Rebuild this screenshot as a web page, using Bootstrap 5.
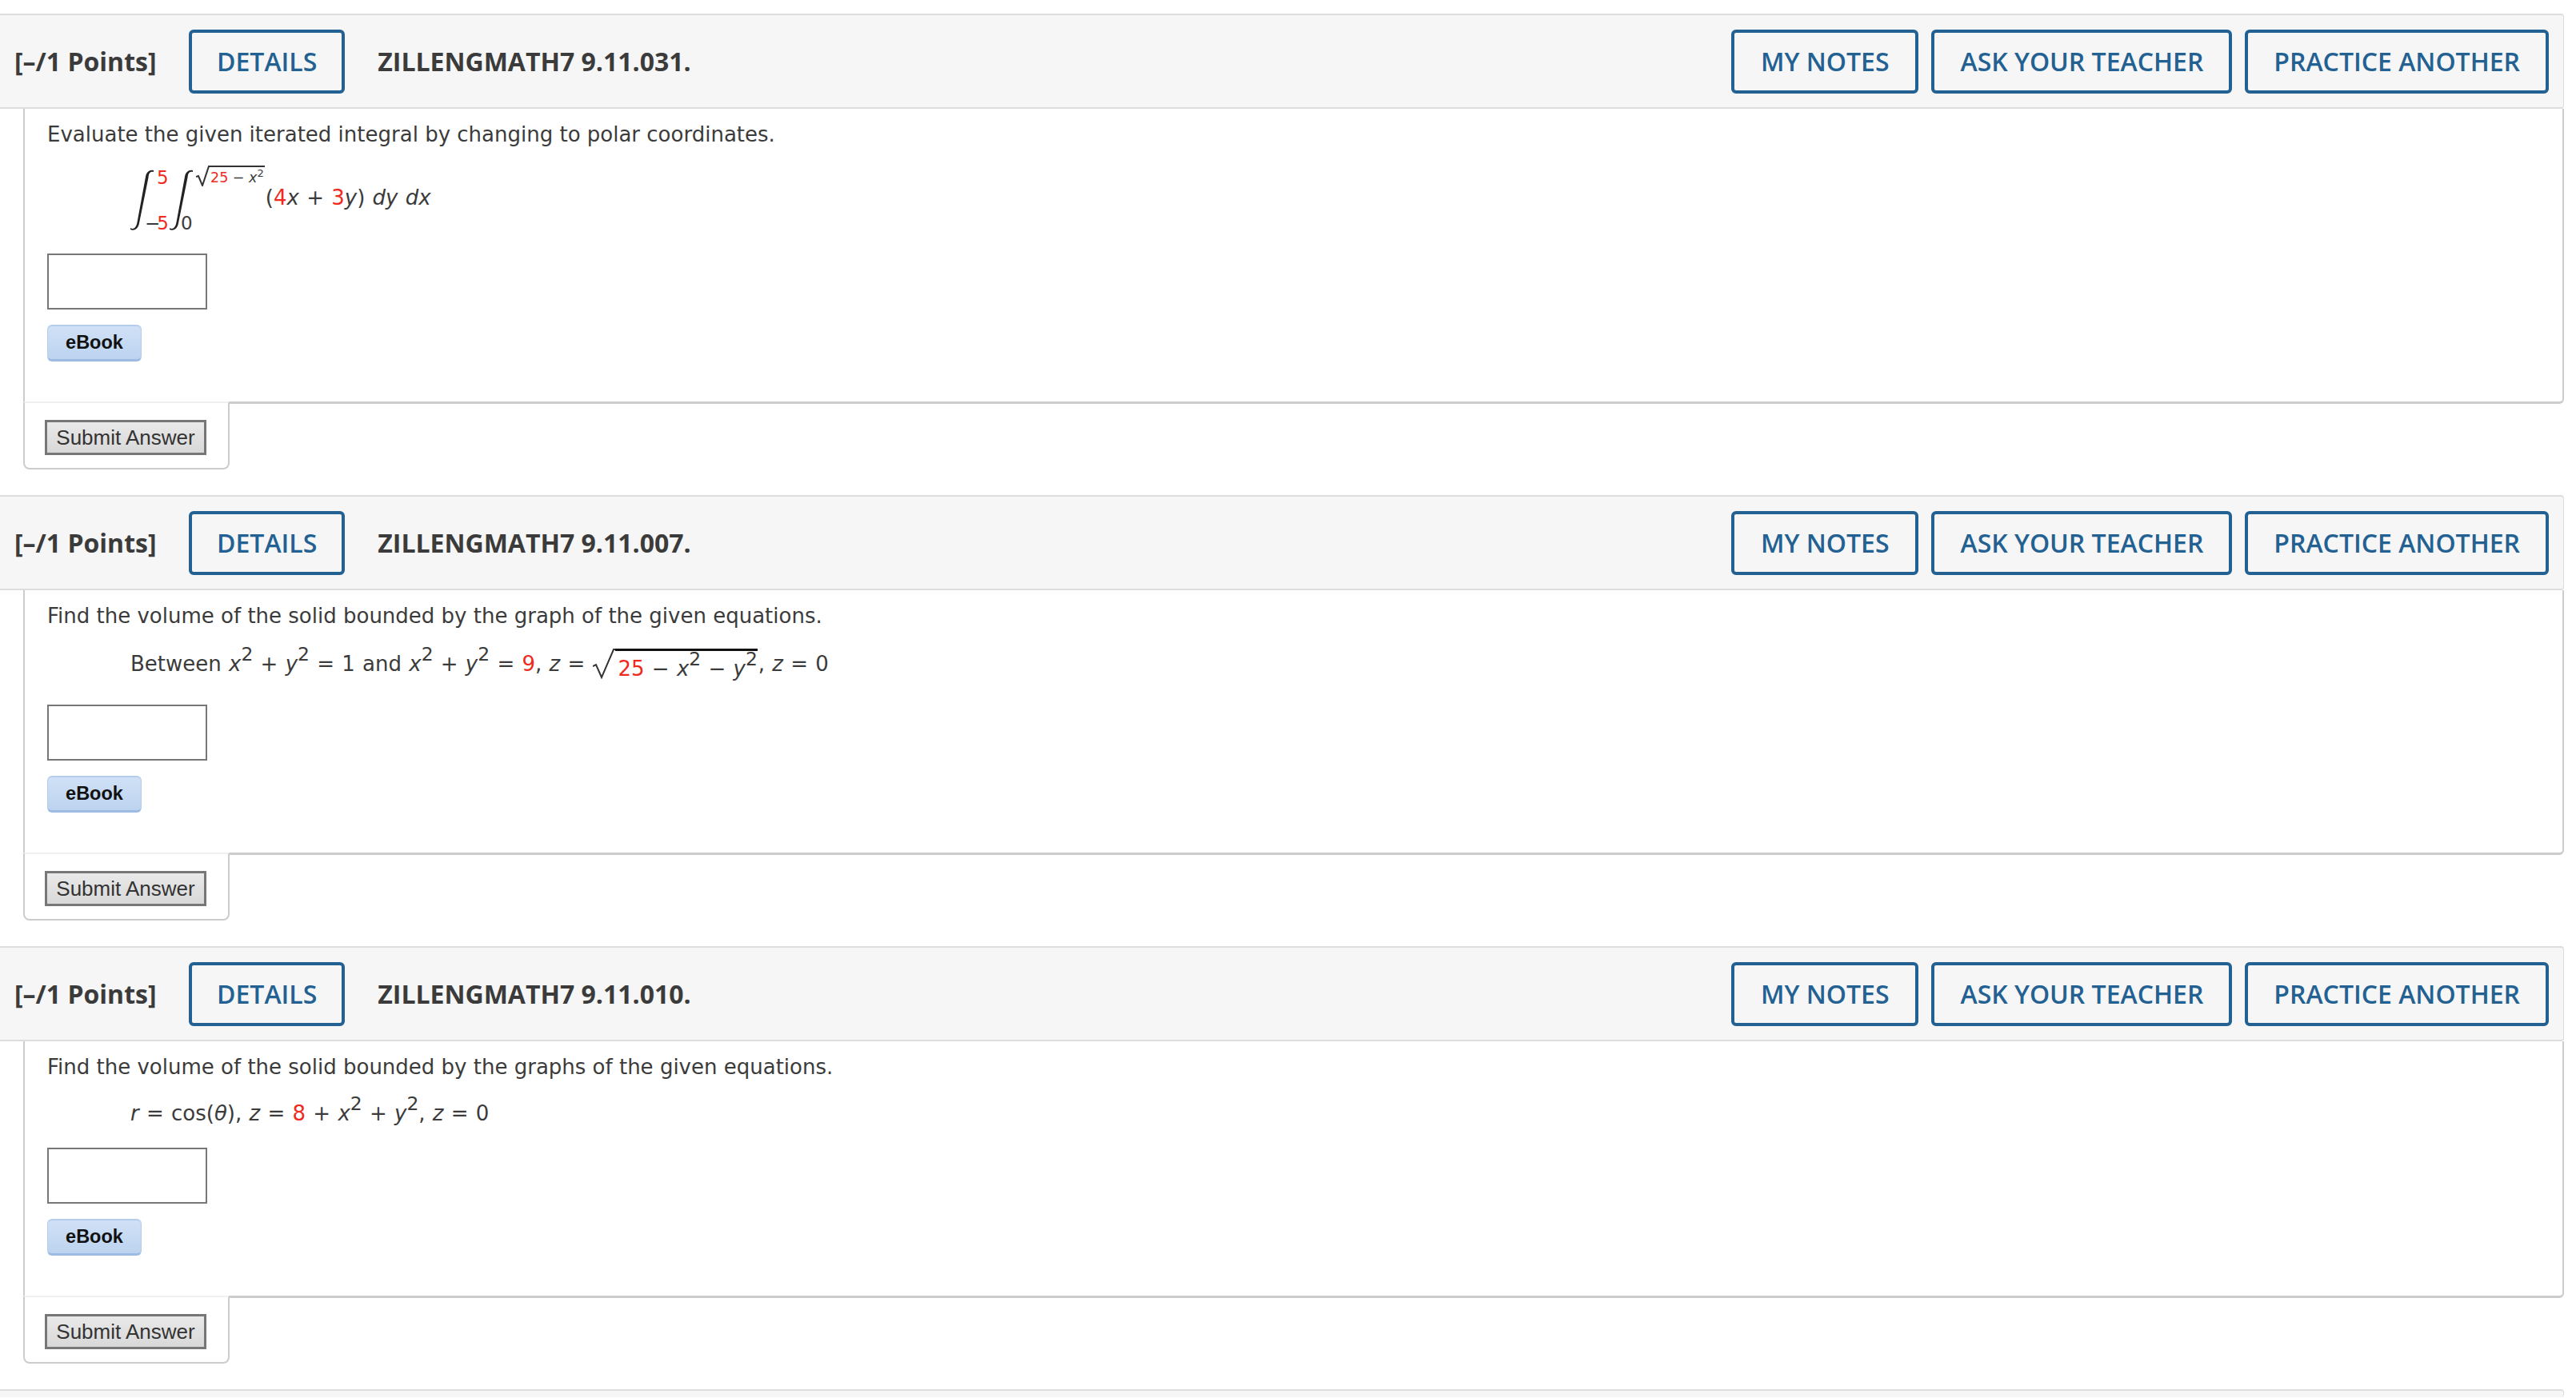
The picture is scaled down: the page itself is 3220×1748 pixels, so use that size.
<!DOCTYPE html>
<html lang="en">
<head>
  <meta charset="UTF-8" />
  <meta name="viewport" content="width=device-width, initial-scale=1.0"/>
  <title>ZILLENGMATH7 9.11</title>
  <link href="https://cdn.jsdelivr.net/npm/bootstrap@5.3.0/dist/css/bootstrap.min.css" rel="stylesheet"/>
  <style>
    body {
      background: #fff;
      color: #3b3b3b;
      font-family: "DejaVu Sans", "Liberation Sans", sans-serif;
      font-size: 26px;
      padding-top: 17px;
      width: 3205px;
    }
    .q-block { margin-bottom: 32px; }
    .q-head {
      height: 119px;
      background: #f6f6f6;
      border-top: 2px solid #ddd;
      border-bottom: 2px solid #ddd;
      border-right: 1px solid #ddd;
      border-radius: 0 4px 4px 0;
      padding: 1px 18px 0;
      font-family: "Open Sans", sans-serif;
      color: #3b3b3b;
    }
    .q-strip { height: 10px; margin-top: 1px; border-bottom: 0; }
    .q-points { width: 218px; font-size: 32px; font-weight: 700; white-space: nowrap; }
    .q-title { width: 500px; margin-left: 41px; font-size: 32px; font-weight: 700; white-space: nowrap; }
    .q-btn {
      height: 80px;
      padding: 0 32px;
      border: 4px solid #236192;
      border-radius: 6px;
      color: #236192;
      background: transparent;
      font-family: "Open Sans", sans-serif;
      font-size: 32px;
      font-weight: 600;
      line-height: 1;
    }
    .q-btn-details { padding: 0 31px; }
    .q-btn-notes { padding: 0 33px; }
    .q-body {
      margin-left: 29px;
      padding: 14px 0 50px 28px;
      background: #fff;
      border-left: 2px solid #ccc;
      border-right: 2px solid #ccc;
      border-bottom: 3px solid #ccc;
      border-radius: 0 0 6px 0;
    }
    .q-prompt { line-height: 36px; }
    .q-eq { line-height: 48px; margin-left: 104px; white-space: nowrap; word-spacing: 1px; }
    .q-eq i { font-style: italic; }
    .q-eq-1 { height: 94px; margin-top: 14px; margin-bottom: 23px; }
    .q-eq-2 { height: 48px; margin-top: 18px; margin-bottom: 27px; }
    .q-eq-3 { height: 48px; margin-top: 16px; margin-bottom: 19px; }
    .q-red { color: #ee2a1e; }
    .q-sup { font-size: 0.9em; position: relative; top: -0.55em; line-height: 0; }
    .q-integral { display: block; width: 30px; height: 76px; margin-top: 6px; flex: none; }
    .q-limits { height: 94px; line-height: 30px; font-size: 23px; padding-top: 7px; }
    .q-limits-1 { width: 34px; margin-left: -15px; }
    .q-limits-2 { width: 19px; margin-left: -16px; }
    .q-top5 { margin-left: 18px; }
    .q-low5 { margin-left: 3px; }
    .q-minus { letter-spacing: -4px; }
    .q-root { font-size: 17.500px; line-height: 26px; height: 94px; padding-top: 7px; margin-right: 1px; word-spacing: 0; }
    .q-root .q-sup { font-size: 0.75em; }
    .q-bar { border-top: 2px solid #333; padding-right: 1px; align-self: flex-start; }
    .q-bar-big { border-top: 3px solid #111; line-height: 34px; height: 38px; margin-right: 1px; padding-left: 4px; padding-top: 5px; }
    .q-answer {
      display: block;
      width: 200px;
      height: 70px;
      border: 2px solid #777;
      border-radius: 0;
      padding: 0 8px;
      background: #fff;
    }
    .q-ebook {
      display: block;
      width: 118px;
      height: 46px;
      margin-top: 19px;
      padding: 0;
      background: linear-gradient(#d0e1f6, #bcd3ef);
      border: 1px solid #b5cdec;
      border-top-width: 2px;
      border-bottom: 3px solid #9dbbe2;
      border-radius: 6px;
      color: #111;
      font-family: "Liberation Sans", sans-serif;
      font-size: 23.500px;
      font-weight: 700;
      line-height: 1;
    }
    .q-tab {
      width: 258px;
      height: 85px;
      margin-left: 29px;
      margin-top: -3px;
      padding: 21px 0 0 25px;
      background: #fff;
      border: 2px solid #ccc;
      border-top: 2px solid #f0f0f0;
      border-radius: 0 0 8px 8px;
    }
    .q-submit {
      display: block;
      width: 202px;
      height: 44px;
      padding: 0;
      background: linear-gradient(#e9e9e9, #d8d8d8);
      border: 3px solid #777;
      border-radius: 0;
      color: #333;
      font-family: "Liberation Sans", sans-serif;
      font-size: 26px;
      line-height: 1;
    }
  </style>
</head>
<body>

  <!-- Pregunta 1 -->
  <section class="q-block">
    <div class="q-head d-flex align-items-center">
      <span class="q-points">[–/1 Points]</span>
      <button class="btn q-btn q-btn-details" type="button">DETAILS</button>
      <span class="q-title me-auto">ZILLENGMATH7 9.11.031.</span>
      <div class="d-flex gap-3">
        <button class="btn q-btn q-btn-notes" type="button">MY NOTES</button>
        <button class="btn q-btn" type="button">ASK YOUR TEACHER</button>
        <button class="btn q-btn" type="button">PRACTICE ANOTHER</button>
      </div>
    </div>
    <div class="q-body">
      <p class="q-prompt m-0">Evaluate the given iterated integral by changing to polar coordinates.</p>
      <div class="q-eq q-eq-1 d-flex align-items-center">
        <svg class="q-integral" viewBox="0 0 30 76"><path fill="#222" d="M0 73C3 75 7 74 8.500 66L19 9C20 3 24 0 29 1L29 3C25 2 23 4 22.500 10L11 67C9.500 75 4 77 0 75Z"/></svg>
        <div class="q-limits q-limits-1 d-flex flex-column justify-content-between">
          <span class="q-red q-top5">5</span><span class="text-nowrap q-low5"><span class="q-minus">−</span><span class="q-red">5</span></span>
        </div>
        <svg class="q-integral" viewBox="0 0 30 76"><path fill="#222" d="M0 73C3 75 7 74 8.500 66L19 9C20 3 24 0 29 1L29 3C25 2 23 4 22.500 10L11 67C9.500 75 4 77 0 75Z"/></svg>
        <div class="q-limits q-limits-2 d-flex flex-column justify-content-between">
          <span>&nbsp;</span><span>0</span>
        </div>
        <div class="q-root d-flex align-items-start">
          <svg width="18" height="26" viewBox="0 0 18 26"><path fill="none" stroke="#333" stroke-width="2" d="M0 14L3 13L8 25L16 1L18 1"/></svg>
          <span class="q-bar"><span class="q-red">25</span> − <i>x</i><span class="q-sup">2</span></span>
        </div>
        <span>(<span class="q-red">4</span><i>x</i> + <span class="q-red">3</span><i>y</i>) <i>dy dx</i></span>
      </div>
      <input class="q-answer" type="text" />
      <button class="q-ebook" type="button">eBook</button>
    </div>
    <div class="q-tab"><button class="q-submit" type="button">Submit Answer</button></div>
  </section>

  <!-- Pregunta 2 -->
  <section class="q-block">
    <div class="q-head d-flex align-items-center">
      <span class="q-points">[–/1 Points]</span>
      <button class="btn q-btn q-btn-details" type="button">DETAILS</button>
      <span class="q-title me-auto">ZILLENGMATH7 9.11.007.</span>
      <div class="d-flex gap-3">
        <button class="btn q-btn q-btn-notes" type="button">MY NOTES</button>
        <button class="btn q-btn" type="button">ASK YOUR TEACHER</button>
        <button class="btn q-btn" type="button">PRACTICE ANOTHER</button>
      </div>
    </div>
    <div class="q-body">
      <p class="q-prompt m-0">Find the volume of the solid bounded by the graph of the given equations.</p>
      <div class="q-eq q-eq-2 d-flex align-items-center">
        <span>Between <i>x</i><span class="q-sup">2</span> + <i>y</i><span class="q-sup">2</span> = 1 and <i>x</i><span class="q-sup">2</span> + <i>y</i><span class="q-sup">2</span> = <span class="q-red">9</span>, <i>z</i> =&nbsp;</span>
        <svg width="28" height="38" viewBox="0 0 28 38"><path fill="none" stroke="#333" stroke-width="2" d="M0 22L4 20L11 36L26 1L28 1"/></svg>
        <span class="q-bar-big"><span class="q-red">25</span> − <i>x</i><span class="q-sup">2</span> − <i>y</i><span class="q-sup">2</span></span>
        <span>, <i>z</i> = 0</span>
      </div>
      <input class="q-answer" type="text" />
      <button class="q-ebook" type="button">eBook</button>
    </div>
    <div class="q-tab"><button class="q-submit" type="button">Submit Answer</button></div>
  </section>

  <!-- Pregunta 3 -->
  <section class="q-block">
    <div class="q-head d-flex align-items-center">
      <span class="q-points">[–/1 Points]</span>
      <button class="btn q-btn q-btn-details" type="button">DETAILS</button>
      <span class="q-title me-auto">ZILLENGMATH7 9.11.010.</span>
      <div class="d-flex gap-3">
        <button class="btn q-btn q-btn-notes" type="button">MY NOTES</button>
        <button class="btn q-btn" type="button">ASK YOUR TEACHER</button>
        <button class="btn q-btn" type="button">PRACTICE ANOTHER</button>
      </div>
    </div>
    <div class="q-body">
      <p class="q-prompt m-0">Find the volume of the solid bounded by the graphs of the given equations.</p>
      <div class="q-eq q-eq-3 d-flex align-items-center">
        <span><i>r</i> = cos(<i>θ</i>), <i>z</i> = <span class="q-red">8</span> + <i>x</i><span class="q-sup">2</span> + <i>y</i><span class="q-sup">2</span>, <i>z</i> = 0</span>
      </div>
      <input class="q-answer" type="text" />
      <button class="q-ebook" type="button">eBook</button>
    </div>
    <div class="q-tab"><button class="q-submit" type="button">Submit Answer</button></div>
  </section>

  <div class="q-head q-strip"></div>

</body>
</html>
